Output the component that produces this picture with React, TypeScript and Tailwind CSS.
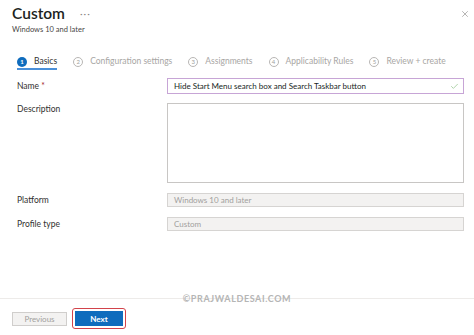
import { Check, X } from 'lucide-react'

const STEPS = [
  { n: 1, label: 'Basics' },
  { n: 2, label: 'Configuration settings' },
  { n: 3, label: 'Assignments' },
  { n: 4, label: 'Applicability Rules' },
  { n: 5, label: 'Review + create' },
]

function Step({ n, label, active }: { n: number; label: string; active?: boolean }) {
  return (
    <div className="relative flex h-[17px] items-center gap-[7px] whitespace-nowrap">
      <span
        className={
          active
            ? 'grid size-[10px] place-items-center rounded-full bg-[#0f6cbd] text-[6px] font-bold leading-none text-white'
            : 'grid size-[10px] place-items-center rounded-full border border-[#b8b6b4] text-[6px] leading-none text-[#a19f9d]'
        }
      >
        {n}
      </span>
      <span className={active ? 'text-[8.5px] text-[#323130]' : 'text-[8.5px] text-[#a8a6a4]'}>{label}</span>
      {active && <span className="absolute bottom-0 left-0 right-0 h-[2px] bg-[#4a90d9]" />}
    </div>
  )
}

function Row({ label, children, className }: { label: React.ReactNode; children: React.ReactNode; className?: string }) {
  return (
    <div className={'flex ' + (className ?? '')}>
      <div className="w-[167px] shrink-0 pl-[17px] text-[8.5px] text-[#323130]">{label}</div>
      {children}
    </div>
  )
}

export default function App() {
  return (
    <div
      className="flex h-[335px] w-[474px] flex-col bg-white"
      style={{ fontFamily: 'Lato, "Liberation Sans", sans-serif' }}
    >
      <div className="flex h-[38px] items-start justify-between pl-[12px] pr-[4px] pt-[1px]">
        <div>
          <div className="flex items-center gap-[15px]">
            <h1 className="text-[15.5px] font-semibold leading-[24px] text-[#201f1e]">Custom</h1>
            <span className="text-[10px] tracking-[1px] text-[#8a8886]">···</span>
          </div>
          <p className="text-[7.5px] leading-[10px] text-[#484644]">Windows 10 and later</p>
        </div>
        <X className="mt-[8px] size-[10px] text-[#8a8886]" strokeWidth={1.5} />
      </div>

      <div className="mt-[15px] flex gap-[16px] pl-[17px]">
        {STEPS.map((s) => (
          <Step key={s.n} n={s.n} label={s.label} active={s.n === 1} />
        ))}
      </div>

      <div className="mt-[8px] flex flex-col">
        <Row label={<>Name <span className="text-[#a4262c]">*</span></>} className="items-center">
          <div className="flex h-[16px] w-[297px] items-center justify-between border border-[#c7a5d6] pl-[6px] pr-[4px]">
            <span className="text-[8px] text-[#201f1e]">Hide Start Menu search box and Search Taskbar button</span>
            <Check className="size-[9px] text-[#74b36b]" strokeWidth={1.5} />
          </div>
        </Row>
        <Row label="Description" className="mt-[9px] items-start">
          <div className="h-[80px] w-[297px] border border-[#c8c6c4]" />
        </Row>
        <Row label="Platform" className="mt-[10px] items-center">
          <div className="flex h-[14px] w-[297px] items-center border border-[#d6d4d2] bg-[#f3f2f1] pl-[6px] text-[8px] text-[#a19f9d]">
            Windows 10 and later
          </div>
        </Row>
        <Row label="Profile type" className="mt-[10px] items-center">
          <div className="flex h-[14px] w-[297px] items-center border border-[#d6d4d2] bg-[#f3f2f1] pl-[6px] text-[8px] text-[#a19f9d]">
            Custom
          </div>
        </Row>
      </div>

      <div className="mt-auto">
        <div className="relative border-t border-[#edebe9]">
          <span className="absolute left-1/2 top-[-7px] -translate-x-1/2 whitespace-nowrap text-[9px] font-bold tracking-[0.6px] text-[#b5b5b5]">
            ©PRAJWALDESAI.COM
          </span>
        </div>
        <div className="flex items-center gap-[5px] pb-[6px] pl-[12px] pt-[9px]">
          <button className="h-[14px] w-[55px] border border-[#d0cecc] bg-[#f3f2f1] text-[8px] text-[#a19f9d]">
            Previous
          </button>
          <div className="rounded-[3px] border-[1.5px] border-[#d2434b] p-[2px]">
            <button className="block h-[15px] w-[48px] bg-[#0f6cbd] text-[8px] font-bold text-white">Next</button>
          </div>
        </div>
      </div>
    </div>
  )
}
